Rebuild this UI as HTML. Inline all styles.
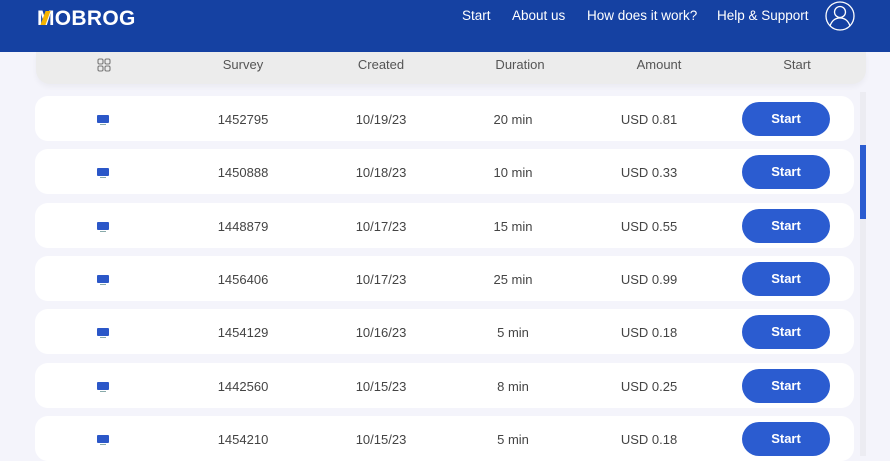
<!DOCTYPE html>
<html><head><style>
body{margin:0;width:890px;height:456px;overflow:hidden;background:#f4f4fb;font-family:"Liberation Sans",sans-serif;position:relative}
.hdr{position:absolute;left:0;top:0;width:890px;height:52px;background:#1541a2}
.logo{position:absolute;left:37px;top:7px;color:#fff;font-weight:bold;font-size:21px;letter-spacing:0.3px}
.nav{position:absolute;top:8px;color:#fff;font-size:13.5px}
.th{position:absolute;left:36px;top:52px;width:830px;height:32px;background:#ececec;border-radius:0 0 14px 14px;box-shadow:0 3px 6px rgba(0,0,0,.04)}
.c{position:absolute;transform:translateX(-50%);white-space:nowrap;color:#444;font-size:13px}
.row{position:absolute;left:35px;width:819px;height:45px;background:#fff;border-radius:13px}
.row .c{top:16px}
.btn{position:absolute;left:707px;top:6px;width:88px;height:34px;border-radius:17px;background:#2b5cd0;color:#fff;font-weight:bold;font-size:13px;text-align:center;line-height:34px}
.mon{position:absolute;left:62px;top:19px;width:12px;height:8px;background:#2b57c8;border-radius:1px}
.mon:after{content:"";position:absolute;left:3px;top:9px;width:6px;height:1px;background:#8aa}
</style></head><body>
<div class="hdr">
<div class="logo"><span style="position:relative">M<span style="position:absolute;left:6px;top:4px;width:5px;height:14px;background:#f5b400;transform:skewX(-20deg)"></span></span>OBROG</div>
<div class="nav" style="left:462px">Start</div>
<div class="nav" style="left:512px">About us</div>
<div class="nav" style="left:587px">How does it work?</div>
<div class="nav" style="left:717px">Help &amp; Support</div>
<svg style="position:absolute;left:825px;top:1px" width="30" height="30" viewBox="0 0 30 30" fill="none" stroke="#fff" stroke-width="1.3"><circle cx="15" cy="15" r="14"/><circle cx="15" cy="11" r="5.5"/><path d="M5 25c2-6 6-8 10-8s8 2 10 8"/></svg>
</div>
<div class="th">
<svg style="position:absolute;left:61px;top:6px" width="14" height="14" viewBox="0 0 14 14" fill="none" stroke="#777" stroke-width="1.1"><rect x="1" y="1" width="5" height="5" rx="1.5"/><rect x="8" y="1" width="5" height="5" rx="1.5"/><rect x="1" y="8" width="5" height="5" rx="1.5"/><rect x="8" y="8" width="5" height="5" rx="1.5"/></svg>
<div class="c" style="left:207px;top:5px;color:#555">Survey</div>
<div class="c" style="left:345px;top:5px;color:#555">Created</div>
<div class="c" style="left:484px;top:5px;color:#555">Duration</div>
<div class="c" style="left:623px;top:5px;color:#555">Amount</div>
<div class="c" style="left:761px;top:5px;color:#555">Start</div>
</div>
<div style="position:absolute;left:860px;top:92px;width:6px;height:364px;background:#ececf2"></div>
<div style="position:absolute;left:860px;top:145px;width:6px;height:74px;background:#2b5cd0"></div>

<div class="row" style="top:96px"><div class="mon"></div><div class="c" style="left:208px">1452795</div><div class="c" style="left:346px">10/19/23</div><div class="c" style="left:478px">20 min</div><div class="c" style="left:614px">USD 0.81</div><div class="btn">Start</div></div>
<div class="row" style="top:149px"><div class="mon"></div><div class="c" style="left:208px">1450888</div><div class="c" style="left:346px">10/18/23</div><div class="c" style="left:478px">10 min</div><div class="c" style="left:614px">USD 0.33</div><div class="btn">Start</div></div>
<div class="row" style="top:203px"><div class="mon"></div><div class="c" style="left:208px">1448879</div><div class="c" style="left:346px">10/17/23</div><div class="c" style="left:478px">15 min</div><div class="c" style="left:614px">USD 0.55</div><div class="btn">Start</div></div>
<div class="row" style="top:256px"><div class="mon"></div><div class="c" style="left:208px">1456406</div><div class="c" style="left:346px">10/17/23</div><div class="c" style="left:478px">25 min</div><div class="c" style="left:614px">USD 0.99</div><div class="btn">Start</div></div>
<div class="row" style="top:309px"><div class="mon"></div><div class="c" style="left:208px">1454129</div><div class="c" style="left:346px">10/16/23</div><div class="c" style="left:478px">5 min</div><div class="c" style="left:614px">USD 0.18</div><div class="btn">Start</div></div>
<div class="row" style="top:363px"><div class="mon"></div><div class="c" style="left:208px">1442560</div><div class="c" style="left:346px">10/15/23</div><div class="c" style="left:478px">8 min</div><div class="c" style="left:614px">USD 0.25</div><div class="btn">Start</div></div>
<div class="row" style="top:416px"><div class="mon"></div><div class="c" style="left:208px">1454210</div><div class="c" style="left:346px">10/15/23</div><div class="c" style="left:478px">5 min</div><div class="c" style="left:614px">USD 0.18</div><div class="btn">Start</div></div>
</body></html>
